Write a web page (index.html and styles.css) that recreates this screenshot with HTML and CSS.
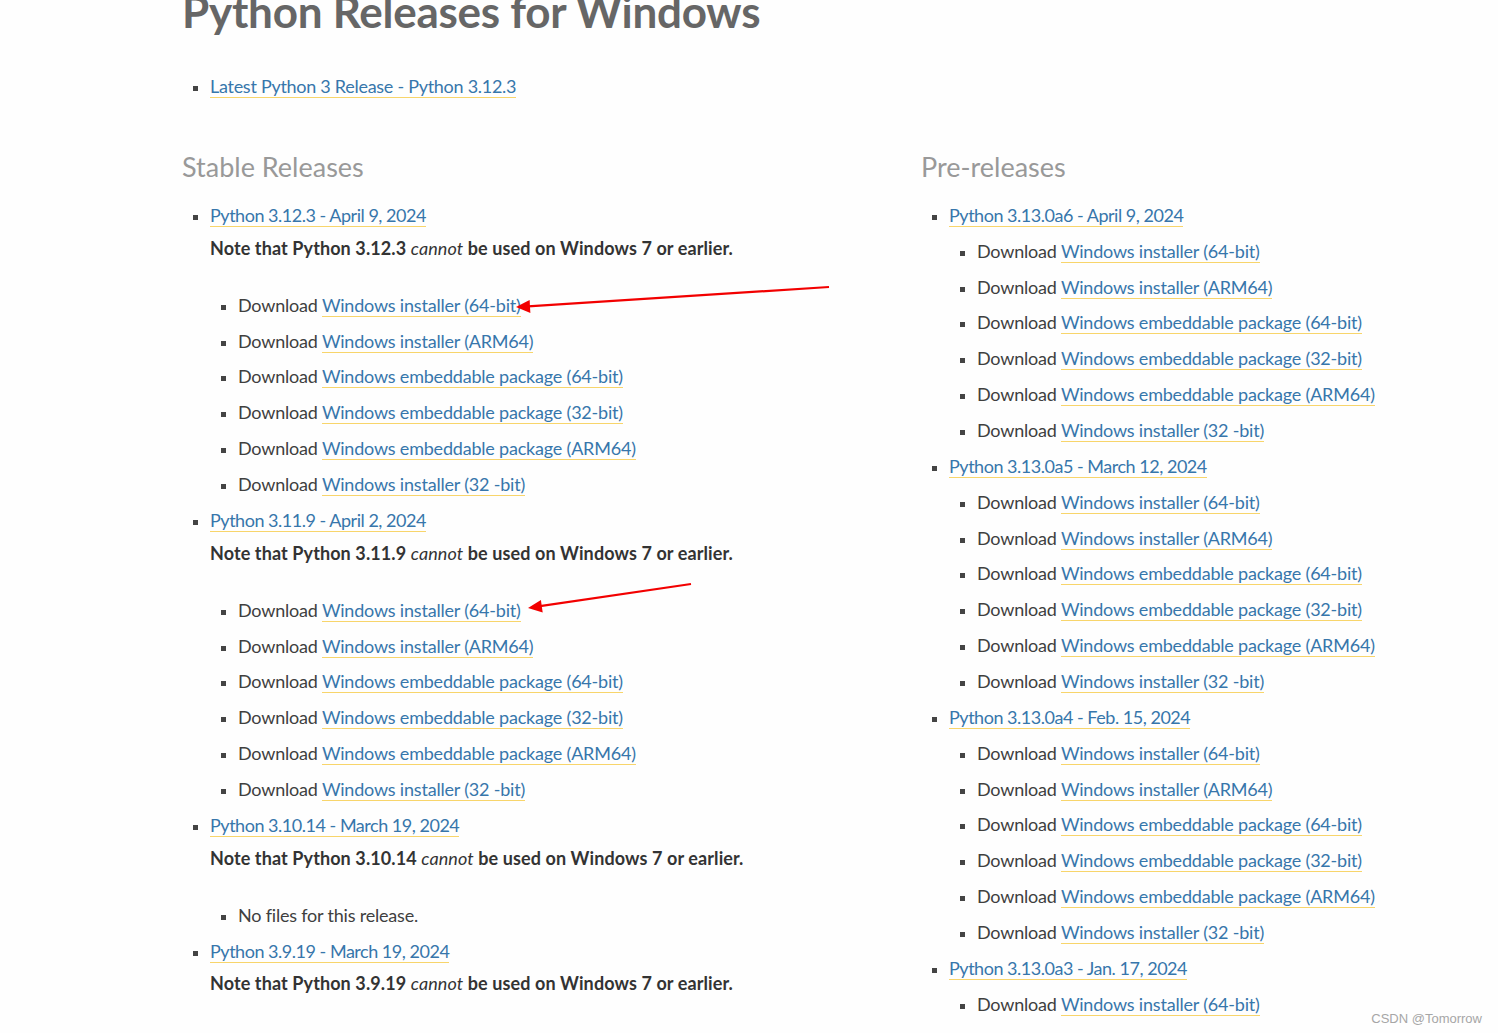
FILE: index.html
```html
<!DOCTYPE html>
<html lang="en">
<head>
<meta charset="utf-8">
<title>Python Releases for Windows</title>
<link rel="stylesheet" href="styles.css">
</head>
<body>
<div class="page">
  <h1 class="title">Python Releases for Windows</h1>
  <ul class="list latest">
    <li><a class="latest-link" href="#">Latest Python 3 Release - Python 3.12.3</a></li>
  </ul>
  <div class="columns">
    <div class="col">
      <h2 class="section">Stable Releases</h2>
      <ul class="list">
        <li><a class="rel" href="#">Python 3.12.3 - April 9, 2024</a>
          <p class="note"><strong>Note that Python 3.12.3 <em>cannot</em> be used on Windows 7 or earlier.</strong></p>
          <ul class="list files">
            <li>Download <a href="#">Windows installer (64-bit)</a></li>
            <li>Download <a href="#">Windows installer (ARM64)</a></li>
            <li>Download <a href="#">Windows embeddable package (64-bit)</a></li>
            <li>Download <a href="#">Windows embeddable package (32-bit)</a></li>
            <li>Download <a href="#">Windows embeddable package (ARM64)</a></li>
            <li>Download <a href="#">Windows installer (32 -bit)</a></li>
          </ul>
        </li>
        <li><a class="rel" href="#">Python 3.11.9 - April 2, 2024</a>
          <p class="note"><strong>Note that Python 3.11.9 <em>cannot</em> be used on Windows 7 or earlier.</strong></p>
          <ul class="list files">
            <li>Download <a href="#">Windows installer (64-bit)</a></li>
            <li>Download <a href="#">Windows installer (ARM64)</a></li>
            <li>Download <a href="#">Windows embeddable package (64-bit)</a></li>
            <li>Download <a href="#">Windows embeddable package (32-bit)</a></li>
            <li>Download <a href="#">Windows embeddable package (ARM64)</a></li>
            <li>Download <a href="#">Windows installer (32 -bit)</a></li>
          </ul>
        </li>
        <li><a class="rel" href="#">Python 3.10.14 - March 19, 2024</a>
          <p class="note"><strong>Note that Python 3.10.14 <em>cannot</em> be used on Windows 7 or earlier.</strong></p>
          <ul class="list files">
            <li>No files for this release.</li>
          </ul>
        </li>
        <li><a class="rel" href="#">Python 3.9.19 - March 19, 2024</a>
          <p class="note"><strong>Note that Python 3.9.19 <em>cannot</em> be used on Windows 7 or earlier.</strong></p>
          <ul class="list files">
            <li>No files for this release.</li>
          </ul>
        </li>
      </ul>
    </div>
    <div class="col">
      <h2 class="section">Pre-releases</h2>
      <ul class="list">
        <li><a class="rel" href="#">Python 3.13.0a6 - April 9, 2024</a>
          <ul class="list subs">
            <li>Download <a href="#">Windows installer (64-bit)</a></li>
            <li>Download <a href="#">Windows installer (ARM64)</a></li>
            <li>Download <a href="#">Windows embeddable package (64-bit)</a></li>
            <li>Download <a href="#">Windows embeddable package (32-bit)</a></li>
            <li>Download <a href="#">Windows embeddable package (ARM64)</a></li>
            <li>Download <a href="#">Windows installer (32 -bit)</a></li>
          </ul>
        </li>
        <li><a class="rel" href="#">Python 3.13.0a5 - March 12, 2024</a>
          <ul class="list subs">
            <li>Download <a href="#">Windows installer (64-bit)</a></li>
            <li>Download <a href="#">Windows installer (ARM64)</a></li>
            <li>Download <a href="#">Windows embeddable package (64-bit)</a></li>
            <li>Download <a href="#">Windows embeddable package (32-bit)</a></li>
            <li>Download <a href="#">Windows embeddable package (ARM64)</a></li>
            <li>Download <a href="#">Windows installer (32 -bit)</a></li>
          </ul>
        </li>
        <li><a class="rel" href="#">Python 3.13.0a4 - Feb. 15, 2024</a>
          <ul class="list subs">
            <li>Download <a href="#">Windows installer (64-bit)</a></li>
            <li>Download <a href="#">Windows installer (ARM64)</a></li>
            <li>Download <a href="#">Windows embeddable package (64-bit)</a></li>
            <li>Download <a href="#">Windows embeddable package (32-bit)</a></li>
            <li>Download <a href="#">Windows embeddable package (ARM64)</a></li>
            <li>Download <a href="#">Windows installer (32 -bit)</a></li>
          </ul>
        </li>
        <li><a class="rel" href="#">Python 3.13.0a3 - Jan. 17, 2024</a>
          <ul class="list subs">
            <li>Download <a href="#">Windows installer (64-bit)</a></li>
            <li>Download <a href="#">Windows installer (ARM64)</a></li>
            <li>Download <a href="#">Windows embeddable package (64-bit)</a></li>
            <li>Download <a href="#">Windows embeddable package (32-bit)</a></li>
            <li>Download <a href="#">Windows embeddable package (ARM64)</a></li>
            <li>Download <a href="#">Windows installer (32 -bit)</a></li>
          </ul>
        </li>
      </ul>
    </div>
  </div>
</div>
<svg class="arrows" width="1498" height="1033" viewBox="0 0 1498 1033" aria-hidden="true">
  <line x1="829" y1="287" x2="528" y2="306.3" stroke="#f20000" stroke-width="2.2"/>
  <polygon points="516,307 530.4,313 529.6,300" fill="#f20000"/>
  <line x1="691" y1="584" x2="540" y2="606.2" stroke="#f20000" stroke-width="2.2"/>
  <polygon points="528,608 542.7,612.4 540.9,600" fill="#f20000"/>
</svg>
<div class="watermark">CSDN @Tomorrow</div>
</body>
</html>
```
FILE: styles.css
```css
html, body {
  margin: 0;
  padding: 0;
  background: #fefefe;
  overflow: hidden;
}
body {
  font-family: Lato, "Liberation Sans", sans-serif;
  font-size: 18px;
  color: #3f3f3f;
  height: 1033px;
  position: relative;
  letter-spacing: -0.2px;
}
.page {
  padding-left: 182px;
}
.title {
  margin: -15px 0 0;
  font-size: 44px;
  line-height: 53px;
  font-weight: 700;
  color: #666;
  letter-spacing: -0.25px;
}
.list {
  list-style: none;
  margin: 0;
  padding: 0;
}
.list li {
  padding-left: 28px;
  line-height: 35.86px;
}
.list li::before {
  content: "";
  display: inline-block;
  width: 5px;
  height: 5px;
  background: #444;
  margin-left: -17px;
  margin-right: 12px;
  vertical-align: middle;
}
.latest {
  margin-top: 31px;
}
a {
  color: #3776ab;
  text-decoration: none;
  border-bottom: 1px solid #f8d56b;
}
.latest-link {
  letter-spacing: -0.28px;
}
.rel {
  letter-spacing: -0.48px;
}
.columns {
  display: grid;
  grid-template-columns: 739px 1fr;
  margin-top: 42px;
}
.section {
  margin: 0 0 11px;
  font-size: 27px;
  line-height: 40px;
  font-weight: 400;
  color: #999;
  letter-spacing: 0;
}
.note {
  margin: -1px 0 0;
  line-height: 30px;
  color: #333;
  letter-spacing: 0.1px;
}
.note em {
  font-weight: 400;
}
.files {
  margin-top: 25px;
}
.watermark {
  position: absolute;
  right: 16px;
  bottom: 7px;
  font-family: "Liberation Sans", Arial, sans-serif;
  font-size: 13px;
  color: #a6a6a6;
  letter-spacing: 0;
}
.arrows {
  position: absolute;
  left: 0;
  top: 0;
  pointer-events: none;
}
```
